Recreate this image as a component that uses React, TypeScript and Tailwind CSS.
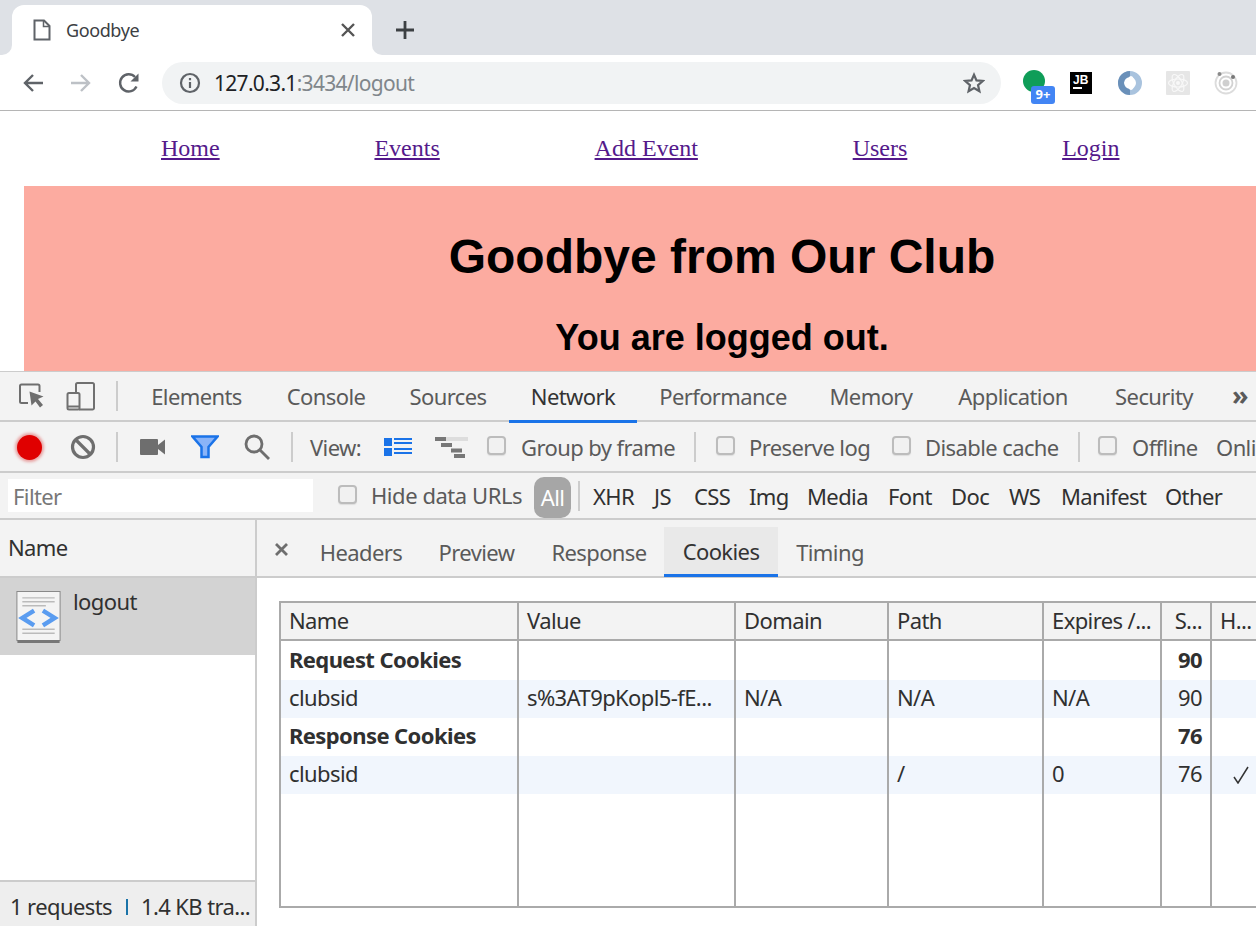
import React from "react";

const ui = "font-['Noto_Sans',sans-serif]";

function Sep({ h = "h-[30px]", c = "" }: { h?: string; c?: string }) {
  return <div className={`w-[2px] bg-[#ccc] ${h} ${c}`} />;
}

function Check() {
  return <div className="w-[19px] h-[19px] rounded-[4px] border-2 border-[#bcbcbc] bg-[#f1f1f1] shadow-[0_1px_1px_#ddd] shrink-0" />;
}

function Tab({ w, label, active }: { w: string; label: string; active?: boolean }) {
  return (
    <div className={`${w} shrink-0 flex items-center justify-center whitespace-nowrap text-[22px] tracking-[-0.6px] ${active ? "self-start h-[51px] text-[#333] border-b-[3px] border-[#1a73e8]" : "h-full text-[#5a5a5a]"}`}>
      {label}
    </div>
  );
}

function Chk({ w, label, gap = "gap-[15px]", track = "tracking-[-0.6px]" }: { w: string; label: string; gap?: string; track?: string }) {
  return (
    <div className={`${w} ${gap} ${track} shrink-0 flex items-center whitespace-nowrap text-[22px] text-[#5a5a5a]`}>
      <div className="-mt-[3px]"><Check /></div>
      <span>{label}</span>
    </div>
  );
}

const colW = ["w-[238px]", "w-[217px]", "w-[153px]", "w-[155px]", "w-[118px]", "w-[50px]", "w-[60px]"];

function Row({ cells, bg, bold, h = "h-[38px]", pb = "pb-[4px]" }: { cells: React.ReactNode[]; bg?: string; bold?: boolean; h?: string; pb?: string }) {
  return (
    <div className={`flex ${h} ${bg ?? ""}`}>
      {cells.map((c, i) => (
        <div
          key={i}
          className={`${colW[i]} shrink-0 ${i < 6 ? "border-r-2 border-[#aaa]" : ""} flex items-center px-[8px] ${pb} whitespace-nowrap overflow-hidden text-[22px] tracking-[-0.6px] text-[#303030] ${i === 5 ? "justify-end" : ""} ${bold ? "font-bold" : ""}`}
        >
          {c}
        </div>
      ))}
    </div>
  );
}

export default function App() {
  return (
    <div className={`w-[1256px] h-[926px] overflow-hidden flex flex-col bg-white ${ui}`}>
      {/* tab strip */}
      <div className="h-[55px] shrink-0 bg-[#dee1e6] flex items-end">
        <div className="w-[12px] h-[50px] bg-white"><div className="w-full h-full bg-[#dee1e6] rounded-br-[10px]" /></div>
        <div className="w-[360px] h-[50px] bg-white rounded-t-[12px] flex items-center pl-[20px]">
          <svg width="20" height="22" viewBox="0 0 20 22" fill="none" stroke="#5f6368" strokeWidth="2"><path d="M2.500 1.500h9.500l5.500 5.500v13.500h-15z" /><path d="M11.500 1.500v6h6" strokeWidth="1.500" /></svg>
          <span className="ml-[14px] text-[18px] text-[#3c4043] tracking-[-0.4px]">Goodbye</span>
          <svg className="ml-auto mr-[17px]" width="14" height="14" viewBox="0 0 14 14" stroke="#555" strokeWidth="2.400"><path d="M1 1l12 12M13 1L1 13" /></svg>
        </div>
        <div className="w-[13px] h-[50px] bg-white"><div className="w-full h-full bg-[#dee1e6] rounded-bl-[10px]" /></div>
        <svg className="ml-[11px] mb-[16px]" width="18" height="18" viewBox="0 0 18 18" stroke="#3c4043" strokeWidth="2.800"><path d="M9 0v18M0 9h18" /></svg>
      </div>

      {/* toolbar */}
      <div className="h-[56px] shrink-0 bg-white border-b border-[#b5b5b5] flex items-center pl-[22px]">
        <svg width="22" height="20" viewBox="0 0 22 20" fill="none" stroke="#5f6368" strokeWidth="2.400"><path d="M21 10H3M11 2l-8 8 8 8" /></svg>
        <svg className="ml-[26px]" width="22" height="20" viewBox="0 0 22 20" fill="none" stroke="#bdc1c6" strokeWidth="2.400"><path d="M1 10h18M11 2l8 8-8 8" /></svg>
        <svg className="ml-[26px]" width="22" height="22" viewBox="0 0 22 22" fill="none" stroke="#5f6368" strokeWidth="2.400"><path d="M18.500 14.500A8.600 8.600 0 1 1 17 5" /><path d="M20.500 1.500v8h-8z" fill="#5f6368" stroke="none" /></svg>
        <div className="ml-[22px] w-[839px] h-[42px] rounded-full bg-[#f1f3f4] flex items-center pl-[17px] pr-[16px]">
          <svg width="22" height="22" viewBox="0 0 22 22" fill="none" stroke="#5f6368" strokeWidth="2.200"><circle cx="11" cy="11" r="9" /><path d="M11 10v6M11 6v2.200" /></svg>
          <span className="ml-[13px] pt-[3px] text-[21px] tracking-[-0.7px] text-[#202124]">127.0.3.1<span className="text-[#80868b]">:3434/logout</span></span>
          <svg className="ml-auto" width="22" height="22" viewBox="0 0 24 24" fill="none" stroke="#5f6368" strokeWidth="2.400" strokeLinejoin="miter"><path d="M12 3l2.700 6.200 6.800.6-5.100 4.500 1.500 6.700L12 17.500 6.100 21l1.500-6.700L2.500 9.800l6.800-.6z" /></svg>
        </div>
        <div className="relative ml-[22px] w-[22px] h-[22px] -mt-[4px] rounded-full bg-[#0f9d58]">
          <div className="absolute left-[8px] top-[16px] w-[24px] h-[18px] rounded-[3px] bg-[#4285f4] text-white text-[13px] font-bold flex items-center justify-center leading-none">9+</div>
        </div>
        <div className="ml-[26px] w-[22px] h-[22px] bg-black text-white flex flex-col px-[3px] pt-[2px] -translate-x-[1px]">
          <span className="text-[12px] font-bold leading-[12px] font-['Liberation_Sans',sans-serif]">JB</span>
          <span className="mt-[1px] w-[9px] h-[2px] bg-white" />
        </div>
        <svg className="ml-[25px]" width="24" height="24" viewBox="0 0 24 24"><circle cx="12" cy="12" r="9" fill="none" stroke="#a9c3de" strokeWidth="6" /><path d="M12 3a9 9 0 0 0 0 18" fill="none" stroke="#6a90b9" strokeWidth="6" /><ellipse cx="13" cy="12" rx="3.500" ry="7" fill="#fff" /></svg>
        <svg className="ml-[24px]" width="24" height="24" viewBox="0 0 24 24" fill="none"><rect width="24" height="24" rx="1" fill="#e6e6e6" /><g stroke="#f8f8f8" strokeWidth="1.200"><ellipse cx="12" cy="12" rx="9.500" ry="4" /><ellipse cx="12" cy="12" rx="9.500" ry="4" transform="rotate(60 12 12)" /><ellipse cx="12" cy="12" rx="9.500" ry="4" transform="rotate(120 12 12)" /></g><circle cx="12" cy="12" r="2" fill="#f8f8f8" /></svg>
        <svg className="ml-[24px]" width="24" height="24" viewBox="0 0 24 24" fill="none"><circle cx="12" cy="12" r="10.500" stroke="#dcdcdc" strokeWidth="1.800" /><circle cx="12" cy="12" r="6.500" stroke="#d2d2d2" strokeWidth="1.800" /><circle cx="12" cy="12" r="3.500" fill="#cfcfcf" /><circle cx="5.500" cy="3" r="2" fill="#8a8a8a" /><circle cx="19" cy="6" r="2" fill="#777" /></svg>
      </div>

      {/* page */}
      <div className="h-[260px] shrink-0 overflow-hidden bg-white font-['Liberation_Sans',sans-serif]">
        <div className="h-[75px] pb-[2px] flex items-center gap-[154.8px] pl-[161px] text-[24px] font-['Liberation_Serif',serif] text-[#551a8b] underline">
          <span>Home</span><span>Events</span><span>Add Event</span><span>Users</span><span>Login</span>
        </div>
        <div className="ml-[24px] w-[1396px] h-[185px] bg-[#fcaba0] text-center text-black font-bold flex flex-col items-center">
          <h1 className="mt-[40px] text-[48px] leading-[62px]">Goodbye from Our Club</h1>
          <h2 className="mt-[29px] text-[36px] leading-[42px]">You are logged out.</h2>
        </div>
      </div>

      {/* devtools */}
      <div className="flex-1 min-h-0 flex flex-col bg-[#f3f3f3] border-t border-[#ccc]">
        <div className="h-[50px] shrink-0 flex items-center border-b-2 border-[#ccc]">
          <svg className="ml-[18px] shrink-0" width="28" height="28" viewBox="0 0 28 28" fill="none"><path d="M10 21H3.500a1.500 1.500 0 0 1-1.500-1.500V4a1.500 1.500 0 0 1 1.500-1.500H20A1.500 1.500 0 0 1 21.500 4v6" stroke="#6e6e6e" strokeWidth="2" /><path d="M11.500 9.500l14 5-5.500 2.500 5 6-3 2.500-4.500-6-4 4z" fill="#6e6e6e" /></svg>
          <svg className="ml-[20px] shrink-0" width="30" height="30" viewBox="0 0 30 30" fill="none" stroke="#707070" strokeWidth="2"><path d="M10 11V3.500a1.500 1.500 0 0 1 1.500-1.500h15A1.500 1.500 0 0 1 28 3.500V27a1.500 1.500 0 0 1-1.500 1.500H13" /><rect x="1.500" y="12" width="12" height="16.500" rx="1.500" /><path d="M1.500 25.500h12" /></svg>
          <Sep c="ml-[20px] shrink-0" />
          <div className="ml-[12px] flex h-full">
            <Tab w="w-[133px]" label="Elements" />
            <Tab w="w-[126px]" label="Console" />
            <Tab w="w-[118px]" label="Sources" />
            <div className="w-[2px] shrink-0" />
            <Tab w="w-[128px]" label="Network" active />
            <Tab w="w-[172px]" label="Performance" />
            <Tab w="w-[124px]" label="Memory" />
            <Tab w="w-[160px]" label="Application" />
            <Tab w="w-[122px]" label="Security" />
          </div>
          <span className="ml-[17px] text-[27px] text-[#5a5a5a] font-bold leading-none -mt-[4px]">»</span>
        </div>

        <div className="h-[51px] shrink-0 flex items-center pt-[1px] border-b-2 border-[#ccc] text-[#5a5a5a]">
          <div className="ml-[17px] w-[25px] h-[25px] rounded-full bg-[#e00000] shadow-[0_0_3px_2px_#e8a0a0] shrink-0" />
          <svg className="ml-[28px] shrink-0" width="26" height="26" viewBox="0 0 26 26" fill="none" stroke="#6e6e6e" strokeWidth="3.200"><circle cx="13" cy="13" r="10.500" /><path d="M5.500 5.500l15 15" /></svg>
          <Sep c="ml-[20px] shrink-0" />
          <svg className="ml-[22px] shrink-0" width="25" height="16" viewBox="0 0 25 16" fill="#6e6e6e"><rect width="18" height="16" rx="1" /><path d="M18 6l7-5.500v15L18 10z" /></svg>
          <svg className="ml-[26px] shrink-0" width="28" height="24" viewBox="0 0 28 24" fill="#8ab4f8" stroke="#1a73e8" strokeWidth="2.500"><path d="M1.500 1.500h25L17.500 12v10h-7V12z" /></svg>
          <svg className="ml-[25px] shrink-0" width="26" height="26" viewBox="0 0 26 26" fill="none" stroke="#6e6e6e" strokeWidth="2.800"><circle cx="10" cy="10" r="8" /><path d="M15.500 15.500L25 25" /></svg>
          <Sep c="ml-[21px] shrink-0" />
          <span className="ml-[17px] text-[22px] tracking-[-0.6px] whitespace-nowrap">View:</span>
          <svg className="ml-[23px] shrink-0" width="28" height="18" viewBox="0 0 28 18" fill="#1a73e8"><rect width="8" height="8" /><rect y="10" width="8" height="8" /><rect x="10" width="18" height="2" /><rect x="10" y="4" width="18" height="2" /><rect x="10" y="10" width="18" height="2" /><rect x="10" y="14" width="18" height="2" /></svg>
          <svg className="ml-[23px] shrink-0" width="33" height="21" viewBox="0 0 33 21"><rect width="33" height="4" fill="#ddd" /><rect width="11" height="4" fill="#777" /><rect x="6" y="6" width="11" height="4" fill="#777" /><rect x="16" y="11.500" width="11" height="4" fill="#777" /><rect x="19" y="17" width="11" height="4" fill="#777" /></svg>
          <Chk w="w-[207px] ml-[19px]" label="Group by frame" />
          <Sep c="shrink-0" />
          <Chk w="w-[176px] ml-[20px]" gap="gap-[14px]" label="Preserve log" />
          <Chk w="w-[186px]" gap="gap-[14px]" label="Disable cache" />
          <Sep c="shrink-0" />
          <Chk w="w-[118px] ml-[18px]" label="Offline" />
          <span className="text-[22px] tracking-[-0.6px] whitespace-nowrap">Online</span>
        </div>

        <div className="h-[47px] shrink-0 flex items-center border-b-2 border-[#ccc] text-[#303030]">
          <div className="ml-[8px] w-[305px] h-[33px] bg-white shrink-0 flex items-center pl-[5px] pt-[2px] text-[22px] tracking-[-0.6px] text-[#777]">Filter</div>
          <Chk w="w-[198px] ml-[25px]" gap="gap-[14px]" track="tracking-[-0.45px]" label="Hide data URLs" />
          <div className="-ml-[2px] w-[37px] h-[41px] self-end shrink-0 rounded-[10px] bg-[#a6a6a6] text-white flex items-center justify-center text-[22px] tracking-[-0.6px]">All</div>
          <Sep c="ml-[7px] shrink-0" />
          <div className="flex items-center pt-[1px] text-[22px] tracking-[-0.6px] whitespace-nowrap">
            <span className="ml-[13px] w-[61px]">XHR</span>
            <span className="w-[40px]">JS</span>
            <span className="w-[55px]">CSS</span>
            <span className="w-[58px]">Img</span>
            <span className="w-[81px]">Media</span>
            <span className="w-[63px]">Font</span>
            <span className="w-[58px]">Doc</span>
            <span className="w-[52px]">WS</span>
            <span className="w-[104px]">Manifest</span>
            <span>Other</span>
          </div>
        </div>

        <div className="flex-1 min-h-0 flex">
          <div className="w-[257px] shrink-0 flex flex-col border-r-2 border-[#ccc] bg-white">
            <div className="h-[58px] shrink-0 bg-[#f3f3f3] border-b-2 border-[#ccc] flex items-center pl-[8px] pb-[2px] text-[22px] tracking-[-0.6px] text-[#303030]">Name</div>
            <div className="h-[77px] shrink-0 bg-[#d3d3d3] flex items-start pl-[16px] pt-[13px]">
              <svg width="45" height="52" viewBox="0 0 45 53"><rect x=".5" y=".5" width="44" height="50" fill="#f4f4f4" stroke="#888" /><rect x="1" y="50" width="43" height="3" fill="#777" /><g stroke="#bbb" strokeWidth="1.500"><path d="M6 7h33M6 11h33M6 15h24M6 39h33M6 43h33" /></g><path d="M18 20l-12 7.500 12 7.500M27 20l12 7.500-12 7.500" fill="none" stroke="#5a9cf0" strokeWidth="4.500" /></svg>
              <span className="ml-[12px] -mt-[6px] text-[22px] tracking-[-0.6px] text-[#303030]">logout</span>
            </div>
            <div className="flex-1" />
            <div className="h-[46px] shrink-0 bg-[#eee] border-t-2 border-[#ccc] flex items-center pl-[10px] pt-[5px] text-[22px] tracking-[-0.6px] text-[#303030] whitespace-nowrap overflow-hidden">
              1 requests<span className="ml-[14px] mr-[13px] w-[2px] h-[16px] bg-[#1a73a8]" />1.4 KB tra...
            </div>
          </div>

          <div className="flex-1 min-w-0 flex flex-col bg-white">
            <div className="h-[58px] shrink-0 bg-[#f3f3f3] border-b-2 border-[#ccc] flex items-end text-[22px] tracking-[-0.6px] text-[#5a5a5a]">
              <svg className="ml-[18px] mb-[20px] shrink-0" width="13" height="13" viewBox="0 0 13 13" stroke="#6e6e6e" strokeWidth="2.800"><path d="M1 1l11 11M12 1L1 12" /></svg>
              <div className="ml-[15px] w-[116px] h-[50px] pt-[2px] flex items-center justify-center">Headers</div>
              <div className="w-[115px] h-[50px] pt-[2px] flex items-center justify-center">Preview</div>
              <div className="w-[130px] h-[50px] pt-[2px] flex items-center justify-center">Response</div>
              <div className="w-[114px] h-[50px] -mb-[1px] pt-[2px] flex items-center justify-center bg-[#e9e9e9] border-b-[3px] border-[#1a73e8] text-[#333]">Cookies</div>
              <div className="w-[104px] h-[50px] pt-[2px] flex items-center justify-center">Timing</div>
            </div>
            <div className="flex-1 min-h-0 pl-[22px] pt-[23px] overflow-hidden">
              <div className="w-[1000px] h-[307px] border-2 border-r-0 border-[#aaa] flex flex-col">
                <div className="border-b-2 border-[#aaa] bg-[#f3f3f3]">
                  <Row h="h-[36px]" pb="pb-[2px]" cells={["Name", "Value", "Domain", "Path", "Expires /...", "S...", "H..."]} />
                </div>
                <Row bold h="h-[39px]" pb="pb-[3px]" cells={["Request Cookies", "", "", "", "", "90", ""]} />
                <Row bg="bg-[#f1f6fd]" cells={["clubsid", "s%3AT9pKopl5-fE...", "N/A", "N/A", "N/A", "90", ""]} />
                <Row bold cells={["Response Cookies", "", "", "", "", "76", ""]} />
                <Row
                  bg="bg-[#f1f6fd]"
                  cells={[
                    "clubsid", "", "", "/", "0", "76",
                    <svg className="ml-[13px] mt-[4px] shrink-0" width="16" height="18" viewBox="0 0 16 18" fill="none" stroke="#333" strokeWidth="1.500"><path d="M1 11l4 6L15 1" /></svg>,
                  ]}
                />
                <Row h="flex-1" cells={["", "", "", "", "", "", ""]} />
              </div>
            </div>
          </div>
        </div>
      </div>
    </div>
  );
}
